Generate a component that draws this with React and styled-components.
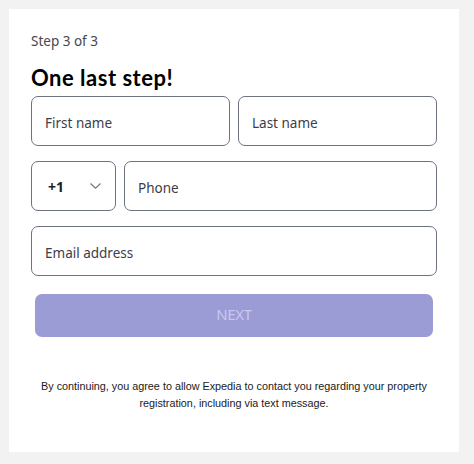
import React from "react";
import styled, { createGlobalStyle } from "styled-components";

const GlobalStyle = createGlobalStyle`
  html, body {
    margin: 0;
    padding: 0;
    background: #f2f2f2;
  }
  * {
    box-sizing: border-box;
  }
`;

const Page = styled.div`
  padding: 9px;
  font-family: "Noto Sans", "Open Sans", sans-serif;
`;

const Card = styled.div`
  width: 450px;
  height: 443px;
  background: #ffffff;
  padding: 22px;
  display: flex;
  flex-direction: column;
`;

const StepLabel = styled.div`
  font-size: 13.5px;
  line-height: 20px;
  color: #474752;
`;

const Title = styled.h1`
  margin: 14px 0 5px;
  font-family: "Lato", sans-serif;
  font-weight: 700;
  font-size: 22px;
  letter-spacing: 0.5px;
  line-height: 26px;
  color: #000;
`;

const Fields = styled.div`
  display: flex;
  flex-direction: column;
  gap: 15px;
`;

const Row = styled.div`
  display: flex;
  gap: 8px;
`;

const Input = styled.input`
  flex: 1;
  min-width: 0;
  height: 50px;
  border: 1px solid #6d7380;
  border-radius: 7px;
  padding: 3px 13px 0;
  font-family: "Noto Sans", "Open Sans", sans-serif;
  font-size: 13.5px;
  color: #2d2d3a;
  background: #fff;
  outline: none;

  &::placeholder {
    color: #3c3c4a;
  }
`;

const CountrySelect = styled.div`
  width: 85px;
  flex: none;
  height: 50px;
  border: 1px solid #6d7380;
  border-radius: 7px;
  display: flex;
  align-items: center;
  justify-content: space-between;
  padding: 0 14px 0 16px;
  font-size: 14px;
  font-weight: 700;
  color: #1e1e28;

  svg {
    width: 11px;
    height: 6px;
  }
`;

const NextButton = styled.button`
  margin: 18px 4px 0;
  height: 43px;
  padding: 0 0 3px;
  border: none;
  border-radius: 7px;
  background: #9b9bd5;
  color: #c8c8ee;
  font-family: "Noto Sans", "Open Sans", sans-serif;
  font-size: 15px;
  letter-spacing: -0.3px;
`;

const Disclaimer = styled.p`
  margin: 41px 0 0;
  text-align: center;
  font-family: "Liberation Sans", Arial, sans-serif;
  font-size: 10.8px;
  line-height: 17px;
  color: #1a1a1a;
`;

export default function App() {
  return (
    <>
      <GlobalStyle />
      <Page>
        <Card>
          <StepLabel>Step 3 of 3</StepLabel>
          <Title>One last step!</Title>
          <Fields>
            <Row>
              <Input placeholder="First name" />
              <Input placeholder="Last name" />
            </Row>
            <Row>
              <CountrySelect>
                <span>+1</span>
                <svg viewBox="0 0 11 6" fill="none">
                  <path d="M0.5 0.5 L5.5 5.2 L10.5 0.5" stroke="#6d7380" strokeWidth="1.1" />
                </svg>
              </CountrySelect>
              <Input placeholder="Phone" />
            </Row>
            <Row>
              <Input placeholder="Email address" />
            </Row>
          </Fields>
          <NextButton disabled>NEXT</NextButton>
          <Disclaimer>
            By continuing, you agree to allow Expedia to contact you regarding your property
            <br />
            registration, including via text message.
          </Disclaimer>
        </Card>
      </Page>
    </>
  );
}
